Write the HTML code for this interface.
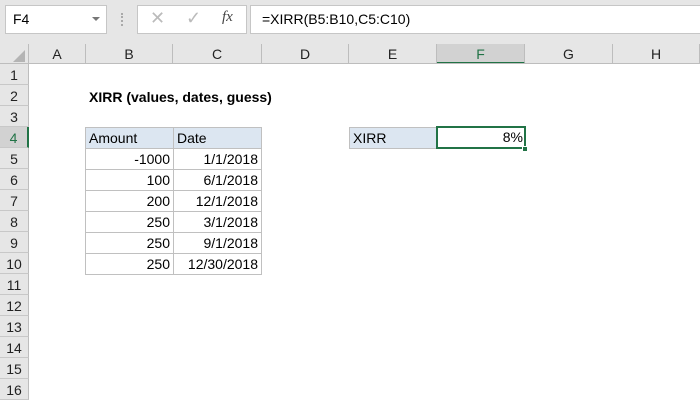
<!DOCTYPE html>
<html><head><style>
*{margin:0;padding:0;box-sizing:border-box}
body{width:700px;height:400px;overflow:hidden;background:#fff;font-family:"Liberation Sans",Arial,sans-serif;font-size:14px;color:#000;position:relative}
.a{position:absolute}
.ch{position:absolute;top:44px;height:20px;line-height:20px;text-align:center;font-size:14px;color:#222;border-right:1px solid #bdbdbd;background:#e6e6e6}
.rh{position:absolute;left:0;width:29px;height:21px;line-height:22px;text-align:center;font-size:14px;color:#222;background:#e6e6e6;border-bottom:1px solid #c8c8c8;border-right:1px solid #bdbdbd}
.c{position:absolute;height:21px;line-height:21px;border:1px solid #c0c0c0;padding:0 3px;font-size:14px;white-space:nowrap}
.r{text-align:right}
.h{background:#dce6f1}
</style></head><body>
<div class="a" style="left:0;top:0;width:700px;height:44px;background:#e6e6e6"></div>
<div class="a" style="left:5px;top:5px;width:102px;height:29px;background:#fff;border:1px solid #c6c6c6;line-height:27px;padding-left:7px;font-size:14px">F4</div>
<div class="a" style="left:92px;top:17px;width:0;height:0;border-left:4px solid transparent;border-right:4px solid transparent;border-top:4px solid #777"></div>
<div class="a" style="left:121px;top:13px;width:2px;height:13px;border-left:2px dotted #aaa"></div>
<div class="a" style="left:137px;top:5px;width:110px;height:29px;background:#fff;border:1px solid #c6c6c6"></div>
<div class="a" style="left:150px;top:8px;font-size:18px;color:#bbb">✕</div>
<div class="a" style="left:186px;top:8px;font-size:18px;color:#bbb">✓</div>
<div class="a" style="left:222px;top:9px;font-size:15px;font-style:italic;font-family:'Liberation Serif',serif;color:#444">fx</div>
<div class="a" style="left:250px;top:5px;width:450px;height:29px;background:#fff;border:1px solid #c6c6c6;border-right:none;line-height:27px;padding-left:11px;font-size:14px">=XIRR(B5:B10,C5:C10)</div>
<div class="a" style="left:0;top:44px;width:29px;height:20px;background:#e6e6e6;border-right:1px solid #bdbdbd"></div>
<div class="a" style="left:13px;top:50px;width:0;height:0;border-left:12px solid transparent;border-bottom:12px solid #b4b4b4"></div>
<div class="ch" style="left:29px;width:57px">A</div>
<div class="ch" style="left:86px;width:87px">B</div>
<div class="ch" style="left:173px;width:89px">C</div>
<div class="ch" style="left:262px;width:87px">D</div>
<div class="ch" style="left:349px;width:88px">E</div>
<div class="ch" style="left:437px;width:88px;background:#d2d2d2;color:#217346;border-bottom:2px solid #217346">F</div>
<div class="ch" style="left:525px;width:88px">G</div>
<div class="ch" style="left:613px;width:87px">H</div>
<div class="a" style="left:0;top:63px;width:700px;height:1px;background:#bdbdbd"></div>
<div class="rh" style="top:64px">1</div>
<div class="rh" style="top:85px">2</div>
<div class="rh" style="top:106px">3</div>
<div class="rh" style="top:127px;background:#d2d2d2;color:#217346;border-right:2px solid #217346">4</div>
<div class="rh" style="top:148px">5</div>
<div class="rh" style="top:169px">6</div>
<div class="rh" style="top:190px">7</div>
<div class="rh" style="top:211px">8</div>
<div class="rh" style="top:232px">9</div>
<div class="rh" style="top:253px">10</div>
<div class="rh" style="top:274px">11</div>
<div class="rh" style="top:295px">12</div>
<div class="rh" style="top:316px">13</div>
<div class="rh" style="top:337px">14</div>
<div class="rh" style="top:358px">15</div>
<div class="rh" style="top:379px">16</div>
<div class="a" style="left:89px;top:87px;font-weight:bold;font-size:14px;line-height:21px">XIRR (values, dates, guess)</div>
<div class="c h" style="left:85px;top:127px;width:89px;height:22px">Amount</div>
<div class="c h" style="left:173px;top:127px;width:89px;height:22px">Date</div>
<div class="c r" style="left:85px;top:148px;width:89px;height:22px">-1000</div>
<div class="c r" style="left:173px;top:148px;width:89px;height:22px">1/1/2018</div>
<div class="c r" style="left:85px;top:169px;width:89px;height:22px">100</div>
<div class="c r" style="left:173px;top:169px;width:89px;height:22px">6/1/2018</div>
<div class="c r" style="left:85px;top:190px;width:89px;height:22px">200</div>
<div class="c r" style="left:173px;top:190px;width:89px;height:22px">12/1/2018</div>
<div class="c r" style="left:85px;top:211px;width:89px;height:22px">250</div>
<div class="c r" style="left:173px;top:211px;width:89px;height:22px">3/1/2018</div>
<div class="c r" style="left:85px;top:232px;width:89px;height:22px">250</div>
<div class="c r" style="left:173px;top:232px;width:89px;height:22px">9/1/2018</div>
<div class="c r" style="left:85px;top:253px;width:89px;height:22px">250</div>
<div class="c r" style="left:173px;top:253px;width:89px;height:22px">12/30/2018</div>
<div class="c h" style="left:349px;top:127px;width:89px;height:22px">XIRR</div>
<div class="c r" style="left:436px;top:126px;width:90px;height:23px;border:2px solid #217346;line-height:19px;padding-right:1px">8%</div>
<div class="a" style="left:522px;top:146px;width:6px;height:6px;background:#217346;border:1px solid #fff"></div>
</body></html>
